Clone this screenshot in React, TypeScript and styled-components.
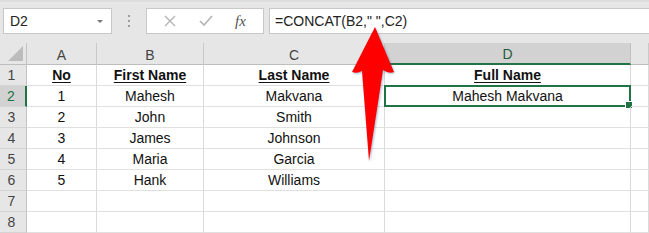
import { Fragment } from "react";
import styled, { createGlobalStyle } from "styled-components";

const GlobalStyle = createGlobalStyle`
  body {
    margin: 0;
    background: #ffffff;
    font-family: "Liberation Sans", Arial, sans-serif;
  }
  * {
    box-sizing: border-box;
  }
`;

const Page = styled.div`
  position: relative;
  width: 649px;
  height: 233px;
  overflow: hidden;
  background: #ffffff;
`;

const Toolbar = styled.div`
  display: flex;
  align-items: flex-start;
  height: 43px;
  padding: 8px 0 0 3px;
  background: #e6e6e6;
  border-top: 2px solid #dcdcdc;
`;

const NameBox = styled.div`
  display: flex;
  align-items: center;
  justify-content: space-between;
  width: 109px;
  height: 26px;
  margin-top: -2px;
  padding: 0 8px 0 6px;
  background: #ffffff;
  border: 1px solid #c8c8c8;
  font-size: 14px;
  color: #222;
`;

const Caret = styled.span`
  width: 0;
  height: 0;
  border-left: 3px solid transparent;
  border-right: 3px solid transparent;
  border-top: 3px solid #777;
`;

const Grip = styled.div`
  display: flex;
  flex-direction: column;
  gap: 3px;
  width: 34px;
  align-items: center;
  padding-top: 5px;

  span {
    width: 2px;
    height: 2px;
    background: #9d9d9d;
  }
`;

const FxButtons = styled.div`
  display: flex;
  align-items: center;
  justify-content: space-around;
  width: 118px;
  height: 26px;
  margin-top: -2px;
  padding: 0 6px;
  background: #ffffff;
  border: 1px solid #c8c8c8;
  color: #b4b4b4;
`;

const FxLabel = styled.span`
  font-family: "Liberation Serif", "Times New Roman", serif;
  font-style: italic;
  font-size: 15px;
  color: #555;
`;

const FormulaInput = styled.div`
  flex: 1;
  display: flex;
  align-items: center;
  height: 26px;
  margin-top: -2px;
  margin-left: 5px;
  padding-left: 5px;
  background: #ffffff;
  border: 1px solid #c8c8c8;
  border-right: none;
  font-size: 14px;
  color: #222;
`;

const Sheet = styled.div`
  display: grid;
  grid-template-columns: 27px 70px 107px 181px 246px 1fr;
  grid-template-rows: 22px;
  grid-auto-rows: 21px;
`;

const Corner = styled.div`
  position: relative;
  background: #e6e6e6;
  border-right: 1px solid #c4c4c4;
  border-bottom: 1px solid #bdbdbd;

  &::after {
    content: "";
    position: absolute;
    right: 3px;
    bottom: 3px;
    width: 0;
    height: 0;
    border-left: 15px solid transparent;
    border-bottom: 15px solid #bcbcbc;
  }
`;

const ColHeader = styled.div<{ $active?: boolean }>`
  display: flex;
  align-items: center;
  justify-content: center;
  padding-top: 2px;
  font-size: 14px;
  color: ${(p) => (p.$active ? "#1e5b37" : "#444")};
  background: ${(p) => (p.$active ? "#d2d2d2" : "#e6e6e6")};
  border-right: 1px solid ${(p) => (p.$active ? "#c0c0c0" : "#c9c9c9")};
  border-bottom: ${(p) =>
    p.$active ? "2px solid #217346" : "1px solid #bdbdbd"};
`;

const RowHeader = styled.div<{ $active?: boolean }>`
  display: flex;
  align-items: center;
  justify-content: center;
  padding-right: 3px;
  font-size: 14px;
  color: ${(p) => (p.$active ? "#217346" : "#444")};
  background: ${(p) => (p.$active ? "#d2d2d2" : "#e6e6e6")};
  border-right: ${(p) =>
    p.$active ? "2px solid #217346" : "1px solid #c4c4c4"};
  border-bottom: 1px solid #d4d4d4;
`;

const Cell = styled.div<{ $bold?: boolean }>`
  position: relative;
  display: flex;
  align-items: center;
  justify-content: center;
  font-size: 14px;
  color: #111;
  font-weight: ${(p) => (p.$bold ? 700 : 400)};
  text-decoration: ${(p) => (p.$bold ? "underline" : "none")};
  text-underline-offset: 2px;
  border-right: 1px solid #dadada;
  border-bottom: 1px solid #e0e0e0;
  white-space: nowrap;
`;

const Selection = styled.div`
  position: absolute;
  inset: -1px -1px -1px -1px;
  border: 2px solid #217346;
  pointer-events: none;

  &::after {
    content: "";
    position: absolute;
    right: -4px;
    bottom: -4px;
    width: 6px;
    height: 6px;
    background: #217346;
    border: 1px solid #ffffff;
  }
`;

const Arrow = styled.svg`
  position: absolute;
  left: 0;
  top: 0;
  pointer-events: none;
  filter: drop-shadow(1px 1px 1px rgba(60, 90, 140, 0.45));
`;

const XIcon = () => (
  <svg width="12" height="12" viewBox="0 0 12 12">
    <path d="M1 1 L11 11 M11 1 L1 11" stroke="#b4b4b4" strokeWidth="1.4" />
  </svg>
);

const CheckIcon = () => (
  <svg width="14" height="12" viewBox="0 0 14 12">
    <path d="M1 6 L5 10 L13 1" stroke="#b4b4b4" strokeWidth="1.6" fill="none" />
  </svg>
);

const columns = ["A", "B", "C", "D", ""];

const rows: string[][] = [
  ["No", "First Name", "Last Name", "Full Name", ""],
  ["1", "Mahesh", "Makvana", "Mahesh Makvana", ""],
  ["2", "John", "Smith", "", ""],
  ["3", "James", "Johnson", "", ""],
  ["4", "Maria", "Garcia", "", ""],
  ["5", "Hank", "Williams", "", ""],
  ["", "", "", "", ""],
  ["", "", "", "", ""],
];

const App = () => {
  return (
    <Page>
      <GlobalStyle />
      <Toolbar>
        <NameBox>
          D2
          <Caret />
        </NameBox>
        <Grip>
          <span />
          <span />
          <span />
        </Grip>
        <FxButtons>
          <XIcon />
          <CheckIcon />
          <FxLabel>fx</FxLabel>
        </FxButtons>
        <FormulaInput>=CONCAT(B2," ",C2)</FormulaInput>
      </Toolbar>

      <Sheet>
        <Corner />
        {columns.map((c, i) => (
          <ColHeader key={i} $active={c === "D"}>
            {c}
          </ColHeader>
        ))}
        {rows.map((row, r) => (
          <Fragment key={r}>
            <RowHeader $active={r === 1}>{r + 1}</RowHeader>
            {row.map((value, c) => (
              <Cell key={c} $bold={r === 0}>
                {value}
                {r === 1 && c === 3 && <Selection />}
              </Cell>
            ))}
          </Fragment>
        ))}
      </Sheet>

      {/* red arrow pointing at the formula */}
      <Arrow width="649" height="233" viewBox="0 0 649 233">
        <path
          d="M375 27 L394 72 Q389 74 383 70 L369 161 L362 71 Q357 74 352 72 Z"
          fill="#ff0000"
        />
      </Arrow>
    </Page>
  );
};

export default App;
